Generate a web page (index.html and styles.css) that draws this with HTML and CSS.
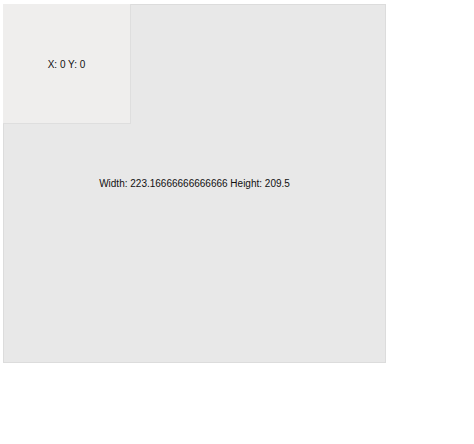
FILE: index.html
```html
<!DOCTYPE html>
<html>
<head>
<meta charset="utf-8">
<link rel="stylesheet" href="styles.css">
</head>
<body>
<div class="outer">
  <div class="inner"><span class="label">X: 0 Y: 0</span></div>
  <div class="size"><span class="label">Width: 223.16666666666666 Height: 209.5</span></div>
</div>
</body>
</html>
```
FILE: styles.css
```css
html, body {
  margin: 0;
  padding: 0;
  background: #ffffff;
}
body {
  padding: 4px 0 0 3px;
  font-family: "Liberation Sans", Arial, sans-serif;
  font-size: 10px;
  color: #111;
}
.outer {
  position: relative;
  box-sizing: border-box;
  width: 383px;
  height: 359px;
  background: #e8e8e8;
  border: 1px solid #dcdcdc;
}
.inner {
  box-sizing: border-box;
  width: 128px;
  height: 120px;
  margin: -1px 0 0 -1px;
  padding-top: 2px;
  background: #efeeed;
  border-right: 1px solid #dedede;
  border-bottom: 1px solid #dedede;
  display: flex;
  align-items: center;
  justify-content: center;
}
.size {
  display: flex;
  justify-content: center;
  margin-top: 54px;
}
.label {
  line-height: 12px;
}
```
